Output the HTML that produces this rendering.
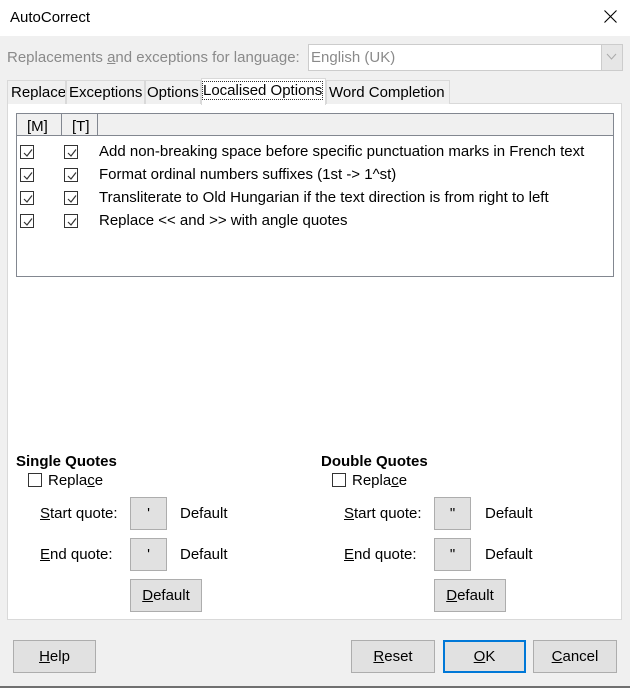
<!DOCTYPE html>
<html><head><style>
*{box-sizing:border-box;margin:0;padding:0}
body{width:630px;height:688px;background:#f0f0f0;font-family:"Liberation Sans",sans-serif;font-size:15px;color:#000;position:relative;overflow:hidden}
.a{position:absolute;white-space:nowrap}
.cb{position:absolute;width:14px;height:14px;border:1px solid #333;background:#fff}
.cb svg{position:absolute;left:1px;top:1px}
.btn{position:absolute;background:#e1e1e1;border:1px solid #adadad;text-align:center}
.tab{position:absolute;top:80px;height:24px;border:1px solid #d9d9d9;border-bottom:none;background:#f0f0f0;padding:3px 3px;font-size:15px;overflow:hidden}
u{text-decoration:underline}
</style></head><body>
<div class="a" style="left:0;top:0;width:630px;height:36px;background:#fff"></div>
<div class="a" style="left:10px;top:9px">AutoCorrect</div>
<svg class="a" style="left:604px;top:10px" width="13" height="13"><path d="M0.5 0.5 L12.5 12.5 M12.5 0.5 L0.5 12.5" stroke="#000" stroke-width="1.1"/></svg>
<div class="a" style="left:7px;top:49px;color:#8a8a8a">Replacements <u>a</u>nd exceptions for language:</div>
<div class="a" style="left:308px;top:44px;width:315px;height:27px;border:1px solid #ccc;background:#fff;color:#8a8a8a;padding:4px 2px">English (UK)</div>
<div class="a" style="left:601px;top:45px;width:21px;height:25px;background:#e6e6e6;border-left:1px solid #ccc"></div>
<svg class="a" style="left:606px;top:53px" width="11" height="8"><path d="M1 1 L5.5 6 L10 1" stroke="#aaa" fill="none"/></svg>
<div class="a" style="left:7px;top:103px;width:615px;height:517px;background:#fff;border:1px solid #d9d9d9"></div>
<div class="tab" style="left:7px;width:59px;padding:3px 3px">Replace</div>
<div class="tab" style="left:66px;width:79px;padding:3px 2px">Exceptions</div>
<div class="tab" style="left:145px;width:56px;padding:3px 1px">Options</div>
<div class="tab" style="left:326px;width:124px;padding:3px 2px">Word Completion</div>
<div class="tab" style="left:201px;top:78px;height:27px;width:125px;background:#fff;z-index:2;padding:3px 1px"><span style="outline:1px dotted #333">Localised Options</span></div>
<div class="a" style="left:16px;top:113px;width:598px;height:164px;border:1px solid #828790;background:#fff"></div>
<div class="a" style="left:17px;top:114px;width:596px;height:22px;background:#f0f0f0;border-bottom:1px solid #828790"></div>
<div class="a" style="left:61px;top:114px;width:1px;height:22px;background:#828790"></div>
<div class="a" style="left:97px;top:114px;width:1px;height:22px;background:#828790"></div>
<div class="a" style="left:27px;top:118px">[M]</div>
<div class="a" style="left:72px;top:118px">[T]</div>
<div id="rows"></div>
<script>
var t=["Add non-breaking space before specific punctuation marks in French text","Format ordinal numbers suffixes (1st -> 1^st)","Transliterate to Old Hungarian if the text direction is from right to left","Replace << and >> with angle quotes"];
var ck='<svg width="12" height="12"><path d="M2 6 L5 9 L10 2.5" stroke="#333" stroke-width="1.2" fill="none"/></svg>';
var h="";t.forEach(function(s,i){var y=145+i*23;h+='<div class="cb" style="left:20px;top:'+y+'px">'+ck+'</div><div class="cb" style="left:64px;top:'+y+'px">'+ck+'</div><div class="a" style="left:99px;top:'+(y-2)+'px">'+s.replace(/</g,"&lt;").replace(/>/g,"&gt;")+'</div>';});
document.getElementById("rows").innerHTML=h;
</script>
<div class="a" style="left:16px;top:453px;font-weight:bold">Single Quotes</div>
<div class="cb" style="left:28px;top:473px"></div>
<div class="a" style="left:48px;top:472px">Repla<u>c</u>e</div>
<div class="a" style="left:40px;top:505px"><u>S</u>tart quote:</div>
<div class="btn" style="left:130px;top:497px;width:37px;height:33px;line-height:31px">'</div>
<div class="a" style="left:180px;top:505px">Default</div>
<div class="a" style="left:40px;top:546px"><u>E</u>nd quote:</div>
<div class="btn" style="left:130px;top:538px;width:37px;height:33px;line-height:31px">'</div>
<div class="a" style="left:180px;top:546px">Default</div>
<div class="btn" style="left:130px;top:579px;width:72px;height:33px;line-height:31px"><u>D</u>efault</div>
<div class="a" style="left:321px;top:453px;font-weight:bold">Double Quotes</div>
<div class="cb" style="left:332px;top:473px"></div>
<div class="a" style="left:352px;top:472px">Repla<u>c</u>e</div>
<div class="a" style="left:344px;top:505px"><u>S</u>tart quote:</div>
<div class="btn" style="left:434px;top:497px;width:37px;height:33px;line-height:31px">"</div>
<div class="a" style="left:485px;top:505px">Default</div>
<div class="a" style="left:344px;top:546px"><u>E</u>nd quote:</div>
<div class="btn" style="left:434px;top:538px;width:37px;height:33px;line-height:31px">"</div>
<div class="a" style="left:485px;top:546px">Default</div>
<div class="btn" style="left:434px;top:579px;width:72px;height:33px;line-height:31px"><u>D</u>efault</div>
<div class="btn" style="left:13px;top:640px;width:83px;height:33px;line-height:31px"><u>H</u>elp</div>
<div class="btn" style="left:351px;top:640px;width:84px;height:33px;line-height:31px"><u>R</u>eset</div>
<div class="btn" style="left:443px;top:640px;width:83px;height:33px;line-height:29px;border:2px solid #0078d7"><u>O</u>K</div>
<div class="btn" style="left:533px;top:640px;width:84px;height:33px;line-height:31px"><u>C</u>ancel</div>
<div class="a" style="left:0;top:686px;width:630px;height:2px;background:#707070"></div>
</body></html>
